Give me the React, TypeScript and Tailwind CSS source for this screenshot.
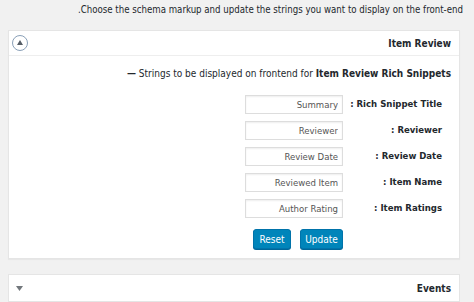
const rows = [
  { value: "Summary", label: ": Rich Snippet Title" },
  { value: "Reviewer", label: ": Reviewer" },
  { value: "Review Date", label: ": Review Date" },
  { value: "Reviewed Item", label: ": Item Name" },
  { value: "Author Rating", label: ": Item Ratings" },
];

const font = { fontFamily: '"DejaVu Sans Condensed", "DejaVu Sans", Verdana, sans-serif' };

export default function App() {
  return (
    <div className="w-[474px] h-[302px] overflow-hidden bg-[#f1f1f1] text-[#23282d] [font-family:'DejaVu_Sans_Condensed','DejaVu_Sans',sans-serif]">
      {/* intro line */}
      <p className="pt-[3px] pr-[11px] text-right text-[9.6px] leading-[13px] text-[#23282d]">
        .Choose the schema markup and update the strings you want to display on the front-end
      </p>

      {/* Item Review panel */}
      <div className="mt-[14px] ml-[8px] mr-[14px] bg-white border border-[#e5e5e5] shadow-[0_1px_1px_rgba(0,0,0,0.04)]">
        <div className="flex h-[25px] items-center justify-between border-b border-[#eeeeee] pl-[3px] pr-[8px]">
          <span className="flex h-[16px] w-[16px] items-center justify-center rounded-full border border-[#8aa0b8]">
            <svg width="6" height="5" viewBox="0 0 6 5" className="mb-[1px]">
              <path d="M3 0 L6 5 L0 5 Z" fill="#555d66" />
            </svg>
          </span>
          <span className="text-[10px] font-bold">Item Review</span>
        </div>

        <div className="pt-[11px] pb-[9px]">
          <p className="pr-[8px] text-right text-[10px] leading-[13px]">
            <span className="font-bold">—</span> Strings to be displayed on frontend for{" "}
            <span className="font-bold">Item Review Rich Snippets</span>
          </p>

          <div className="mt-[15px] flex flex-col gap-[7px] pr-[17px]">
            {rows.map((r) => (
              <div key={r.label} className="flex items-center justify-end">
                <input
                  readOnly
                  value={r.value}
                  className="h-[19px] w-[98px] border border-[#dddddd] bg-white pr-[4px] text-right text-[9.5px] text-[#555555] outline-none shadow-[inset_0_1px_2px_rgba(0,0,0,0.07)]"
                  style={font}
                />
                <span className="w-[99px] text-right text-[9.5px] font-bold">{r.label}</span>
              </div>
            ))}
          </div>

          <div className="mt-[11px] flex justify-end gap-[9px] pr-[116px]">
            <button className="h-[20px] w-[38px] rounded-[3px] border border-[#0073aa] bg-[#0085ba] text-[10px] text-white shadow-[0_1px_0_#006799]">
              Reset
            </button>
            <button className="h-[20px] w-[43px] rounded-[3px] border border-[#0073aa] bg-[#0085ba] text-[10px] text-white shadow-[0_1px_0_#006799]">
              Update
            </button>
          </div>
        </div>
      </div>

      {/* Events panel */}
      <div className="mt-[15px] ml-[8px] mr-[14px] bg-white border border-[#e5e5e5]">
        <div className="flex h-[26px] items-center justify-between pl-[7px] pr-[8px]">
          <svg width="7" height="5" viewBox="0 0 7 5">
            <path d="M0 0 L7 0 L3.5 5 Z" fill="#72777c" />
          </svg>
          <span className="text-[10px] font-bold">Events</span>
        </div>
      </div>
    </div>
  );
}
